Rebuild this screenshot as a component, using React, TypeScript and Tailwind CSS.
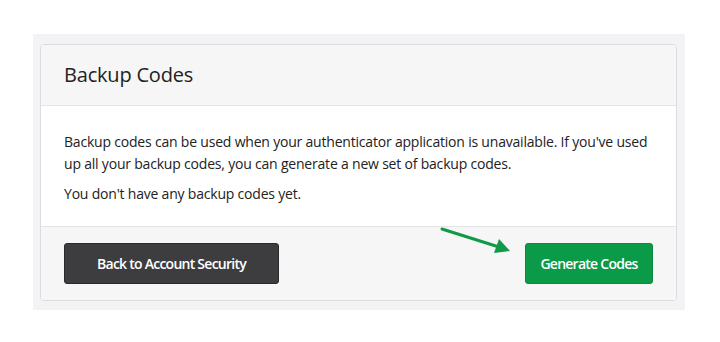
import React from "react";

export default function App() {
  return (
    <div className="w-[720px] h-[342px] bg-white pt-[34px] pl-[33px]" style={{ fontFamily: '"Open Sans", "Noto Sans", sans-serif' }}>
      <div className="w-[652px] h-[276px] bg-[#f3f3f5] pt-[10px] pl-[7px]">
        <div className="w-[637px] h-[257px] border border-[#dcdcde] rounded-[4px] overflow-hidden flex flex-col bg-white">
          <div className="h-[61px] bg-[#f6f6f7] border-b border-[#e4e4e6] flex items-center px-[23px] shrink-0">
            <h1 className="text-[20px] text-[#222] font-normal leading-none tracking-[-0.2px]">Backup Codes</h1>
          </div>
          <div className="h-[121px] bg-white border-b border-[#e4e4e6] px-[23px] pt-[25px] text-[14px] leading-[22px] text-[#222] tracking-[-0.2px] shrink-0">
            <p>Backup codes can be used when your authenticator application is unavailable. If you've used up all your backup codes, you can generate a new set of backup codes.</p>
            <p className="mt-[8px]">You don't have any backup codes yet.</p>
          </div>
          <div className="flex-1 bg-[#f6f6f7] px-[23px] pt-[16px] flex items-start justify-between relative">
            <button className="w-[215px] h-[41px] bg-[#3d3d3f] border border-[#2a2a2c] rounded-[3px] text-white text-[14px] font-semibold tracking-[-0.75px]">
              Back to Account Security
            </button>
            <button className="w-[128px] h-[41px] bg-[#0b9a48] border border-[#098a40] rounded-[3px] text-white text-[14px] font-semibold tracking-[-0.75px]">
              Generate Codes
            </button>
            <svg className="absolute left-[398px] top-[-2px]" width="74" height="30" viewBox="0 0 74 30">
              <line x1="3" y1="4" x2="60" y2="22" stroke="#109a48" strokeWidth="3" strokeLinecap="round" />
              <polygon points="71,26 55,28 60,14" fill="#109a48" />
            </svg>
          </div>
        </div>
      </div>
    </div>
  );
}
